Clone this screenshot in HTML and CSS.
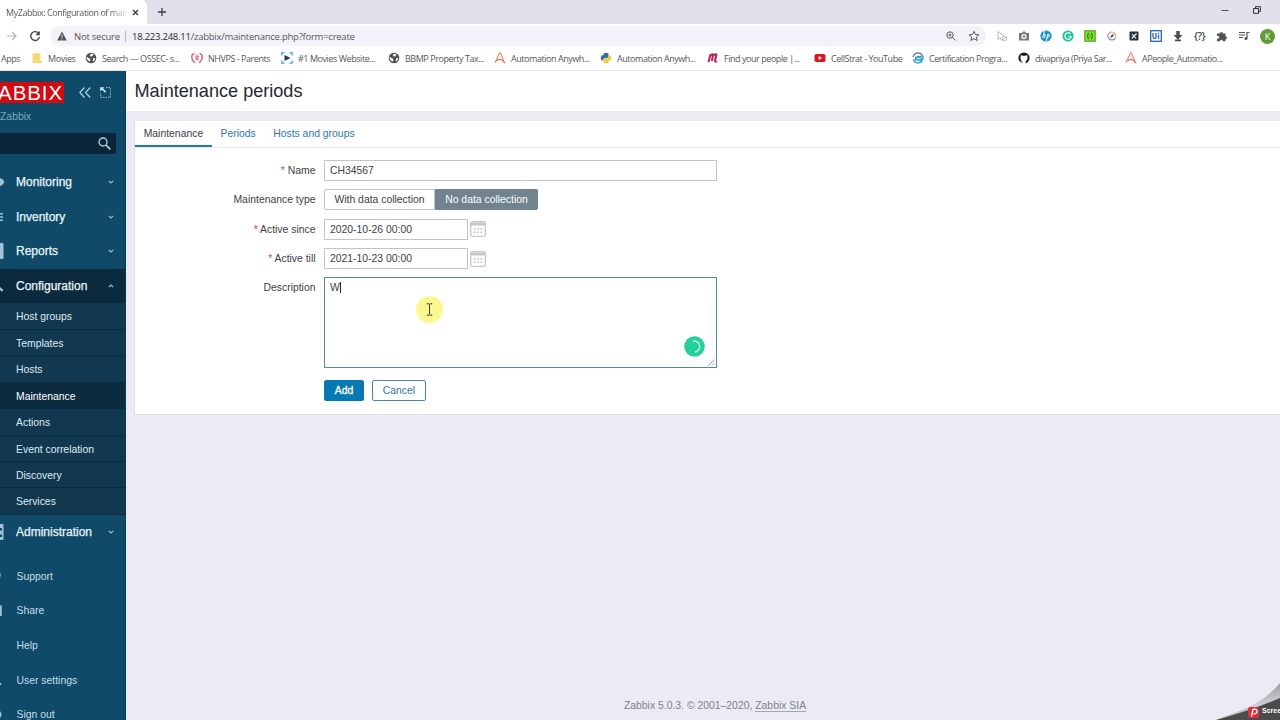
FILE: index.html
```html
<!DOCTYPE html>
<html lang="en">
<head>
  <meta charset="UTF-8">
  <title>MyZabbix: Configuration of maintenance periods</title>
  <link rel="stylesheet" href="styles.css">
</head>
<body>
  <!-- Shared icons -->
  <svg width="0" height="0" class="icon-defs">
    <symbol id="globe" viewBox="0 0 12 12">
      <circle cx="6" cy="6" r="5.3" fill="#4d5156"/>
      <path d="M1.5 4.5Q3 6 4.5 6.2L5.5 8 4.5 9.8Q2 8.500 1.500 6ZM6 1.800L8.500 2.300 7.500 4.200 5.500 4.500 4.800 3.200ZM8 6.200L10.300 6 9.500 8.500 7.800 9.500Z" fill="#fff"/>
    </symbol>
    <symbol id="anywhere" viewBox="0 0 12 12">
      <path d="M1 10.800L5.400 1Q6 .4 6.500 1.200L10 9.500" fill="none" stroke="#e58b5e" stroke-width="1.100"/>
      <path d="M2.500 9Q6 5.500 9.500 9.500L11 11" fill="none" stroke="#d9656a" stroke-width="1.100"/>
    </symbol>
    <symbol id="chevron" viewBox="0 0 6 6">
      <path d="M.8 1.800L3 4 5.200 1.800" fill="none" stroke="#9fc3d6" stroke-width="1.100"/>
    </symbol>
    <symbol id="calendar" viewBox="0 0 16 16">
      <rect x=".7" y=".7" width="14.600" height="14.600" rx="1.500" fill="#fff" stroke="#c3c6ce" stroke-width="1.300"/>
      <path d="M.5 1.500h15v3H.5z" fill="#c3c6ce"/>
      <path d="M4 8h1.500M7.300 8h1.500M10.600 8h1.500M4 11.300h1.500M7.300 11.300h1.500M10.600 11.300h1.500" stroke="#b9bdc6" stroke-width="1.500"/>
    </symbol>
  </svg>

  <!-- Browser -->
  <header class="browser">
    <div class="tab-strip">
      <div class="tab">
        <span class="tab-title">MyZabbix: Configuration of main</span>
        <svg class="tab-close" width="7" height="7" viewBox="0 0 7 7"><path d="M1 1l5 5M6 1L1 6" stroke="#3c4043" stroke-width="1.400"/></svg>
      </div>
      <svg class="new-tab" width="10" height="10" viewBox="0 0 10 10"><path d="M5 1v8M1 5h8" stroke="#3c4043" stroke-width="1.300"/></svg>
      <div class="window-buttons">
        <svg width="8" height="8" viewBox="0 0 8 8"><path d="M.5 4.500h7" stroke="#555"/></svg>
        <svg width="8" height="8" viewBox="0 0 8 8"><path d="M.6 2.500h4.900v4.900H.6zM2.500 2.300V.7h4.900v4.900H5.700" fill="none" stroke="#333"/></svg>
      </div>
    </div>

    <div class="toolbar">
      <svg class="nav-forward" width="12" height="12" viewBox="0 0 12 12"><path d="M1 6h9M6 2l4 4-4 4" fill="none" stroke="#b1b3b6" stroke-width="1.200"/></svg>
      <svg class="nav-reload" width="12" height="12" viewBox="0 0 12 12"><path d="M9.700 3.500A4.400 4.400 0 1 0 10.400 7" fill="none" stroke="#45494d" stroke-width="1.400"/><path d="M10.800.8v4.400H6.400z" fill="#45494d"/></svg>
      <div class="address-bar">
        <svg class="warn" width="10" height="10" viewBox="0 0 10 10"><path d="M5 .5L9.800 9.500H.2z" fill="#505357"/><path d="M5 3.700v2.800M5 7.300v1" stroke="#f1f1f6"/></svg>
        <span class="not-secure">Not secure</span>
        <span class="url"><b>18.223.248.11</b>/zabbix/maintenance.php?form=create</span>
        <svg class="zoom-icon" width="10" height="10" viewBox="0 0 10 10"><circle cx="4" cy="4" r="3.200" fill="none" stroke="#55595d"/><path d="M6.300 6.300L9.500 9.500M4 2.500v3M2.500 4h3" stroke="#55595d"/></svg>
        <svg width="12" height="12" viewBox="0 0 12 12"><path d="M6 1.300l1.400 3.200 3.500.3-2.600 2.300.8 3.400L6 8.700l-3.100 1.800.8-3.400L1.100 4.800l3.500-.3z" fill="none" stroke="#55595d"/></svg>
      </div>
      <div class="extensions">
        <svg viewBox="0 0 12 12"><path d="M2 1.500v8l2-2 1.500 3M2 1.500l6 4.800" fill="none" stroke="#b4b5b8"/><circle cx="8.500" cy="8.500" r="2.300" fill="none" stroke="#b4b5b8"/><path d="M7 10l3-3" stroke="#b4b5b8"/></svg>
        <svg viewBox="0 0 12 12"><path d="M1 3h3l1-1.500h2L8 3h3v7.500H1z" fill="#77797c"/><circle cx="6" cy="6.500" r="2.600" fill="#fff"/><circle cx="6" cy="6.500" r="1.300" fill="#77797c"/></svg>
        <svg viewBox="0 0 12 12"><circle cx="6" cy="6" r="5.600" fill="#1494ce"/><path d="M4.500 1L2.700 8M3.500 5q2-1.500 1.700 0L4.500 8M8 4L6.200 11M7.500 4.500q2.500-1 1.700 1.200T6.800 8" fill="none" stroke="#fff"/></svg>
        <svg viewBox="0 0 12 12"><circle cx="6" cy="6" r="5.600" fill="#1cc598"/><path d="M8.500 4A3.200 3.200 0 1 0 9.200 6.700H6.500" fill="none" stroke="#fff" stroke-width="1.200"/></svg>
        <svg viewBox="0 0 12 12"><rect x=".8" y=".8" width="10.400" height="10.400" fill="#7be52a" stroke="#459315"/><path d="M4.800 3.200H4v2L3.200 6 4 6.800v2h.8M7.200 3.200H8v2l.8.8-.8.800v2h-.8M6 4.500v1M6 6.500v1" fill="none" stroke="#31620f"/></svg>
        <svg viewBox="0 0 12 12"><path d="M2.200 7.500A4 4 0 0 1 6 2" fill="none" stroke="#d9867a" stroke-width="1.200"/><path d="M6 2a4 4 0 0 1 3 6.500" fill="none" stroke="#e6b45b" stroke-width="1.200"/><path d="M9 8.500a4 4 0 0 1-6.800-1" fill="none" stroke="#698ed0" stroke-width="1.200"/><path d="M8.300 3.700L6.800 7 4 8l1.200-3z" fill="#44618a"/></svg>
        <svg viewBox="0 0 12 12"><rect x="1.500" y="1.500" width="9" height="9" rx="1" fill="#27313c"/><path d="M4 4l4 4.500M8.500 3.500l-4.800 5" stroke="#fff" stroke-width="1.100"/></svg>
        <svg viewBox="0 0 12 12"><rect x=".7" y=".7" width="10.600" height="10.600" fill="#fff" stroke="#2862b6" stroke-width="1.300"/><path d="M3 3v4q0 1.500 1.500 1.500T6 7V3M8.500 4.800v3.900M8.500 2.700v1.200" fill="none" stroke="#2862b6" stroke-width="1.300"/></svg>
        <svg viewBox="0 0 12 12"><path d="M4.300 1h3.400v4H10.500L6 9.800 1.500 5h2.800zM3 9.500h6v1.800H3z" fill="#4a4d50"/></svg>
        <span class="json-ext">{?}</span>
        <svg viewBox="0 0 12 12"><path d="M1 3.500h2.800a1.500 1.500 0 1 1 3 0h2.700v2.700a1.500 1.500 0 1 1 0 3v2H7a1.500 1.500 0 1 0-3 0H1V8.500a1.500 1.500 0 1 0 0-2.600z" fill="#4f5357"/></svg>
        <svg viewBox="0 0 12 12"><path d="M1 2.500h6M1 5h6M1 7.500h4M9 8V2.500h2.500" fill="none" stroke="#4f5357" stroke-width="1.200"/><circle cx="8" cy="8.500" r="1.500" fill="#4f5357"/></svg>
        <span class="avatar">K</span>
      </div>
    </div>

    <nav class="bookmarks">
      <a><span>Apps</span></a>
      <a><svg viewBox="0 0 12 12"><path d="M1.500 1.200h8v8.300l1 1.500H1.500z" fill="#f6da79"/><path d="M8 9.500h2.500V11H8z" fill="#e8c458"/></svg><span>Movies</span></a>
      <a><svg><use href="#globe"/></svg><span>Search — OSSEC- s...</span></a>
      <a><svg viewBox="0 0 12 12"><path d="M3.500 1.500Q.5 2 .8 5.500 1 9 4 10.500M8.500 1.500q3 .5 2.700 4Q11 9 8 10.500" fill="none" stroke="#e0708c" stroke-width="1.500"/><path d="M4.500 3q1.500-2 3 0l.5 3.500Q6 11 4 6.500z" fill="#f2afbf"/><path d="M5 4.500h.8M6.700 4.500h.8M6 6v2" stroke="#b64261"/></svg><span>NHVPS - Parents</span></a>
      <a><svg viewBox="0 0 12 12"><path d="M3.500.8H.8v2.700M8.500.8h2.700v2.700M.8 8.500v2.700h2.700M11.200 8.500v2.700H8.500" fill="none" stroke="#32acd8" stroke-width="1.300"/><path d="M3.500 3l6 3-6 3z" fill="#28364a"/></svg><span>#1 Movies Website...</span></a>
      <a><svg><use href="#globe"/></svg><span>BBMP Property Tax...</span></a>
      <a><svg><use href="#anywhere"/></svg><span>Automation Anywh...</span></a>
      <a><svg viewBox="0 0 12 12"><path d="M3.500 3V1.500Q6-.2 8.500 1.500V5L7 6.200H4L3 8.500H1.500Q0 6 1.500 3.800z" fill="#3d7199"/><path d="M8.500 9v1.500Q6 12.200 3.500 10.500V7.500L5 6.600h3L9 3.500h1.500Q12 6 10.500 8.200z" fill="#f2cc43"/></svg><span>Automation Anywh...</span></a>
      <a><svg viewBox="0 0 12 12"><path d="M1.500 10L3.500 2.500M3.300 3.500Q6.500 1 6 3.500L4.800 9M6 3.500Q10 1 9.300 3.500L8 8.500q0 1.500 2 1" fill="none" stroke="#c31d52" stroke-width="2"/></svg><span>Find your people |...</span></a>
      <a><svg viewBox="0 0 12 12"><rect x=".5" y="2" width="11" height="8" rx="1.800" fill="#d91921"/><path d="M4.700 4l3.300 2-3.300 2z" fill="#fff"/></svg><span>CellStrat - YouTube</span></a>
      <a><svg viewBox="0 0 12 12"><path d="M1 5Q2 1 6 1q4 0 4.500 3.500L7 4.500Q3 5 3 9" fill="none" stroke="#6f8795" stroke-width="1.300"/><path d="M1.500 7.500Q2 10.800 6 11q4-.5 5-5Q8 9 4 7.500M3 5.500h6" fill="none" stroke="#2ba8dc" stroke-width="1.500"/></svg><span>Certification Progra...</span></a>
      <a><svg viewBox="0 0 12 12"><circle cx="6" cy="6" r="5.600" fill="#191717"/><path d="M4.300 12V9.500Q2.300 8.500 2.500 5.800L2.700 3l1.800.8h3L9.300 3l.2 2.800Q9.700 8.500 7.700 9.300V12z" fill="#fff"/><path d="M4.300 10.300Q3 10.500 2.300 9" fill="none" stroke="#fff" stroke-width=".8"/></svg><span>divapriya (Priya Sar...</span></a>
      <a><svg><use href="#anywhere"/></svg><span>APeople_Automatio...</span></a>
    </nav>
  </header>

  <!-- Zabbix -->
  <div class="app">
    <aside class="sidebar">
      <div class="sidebar-header">
        <div class="logo">ZABBIX</div>
        <svg class="collapse" width="12" height="11" viewBox="0 0 12 11"><path d="M5.500.5L.8 5.500l4.700 5M11.200.5l-4.700 5 4.700 5" fill="none" stroke="#b5d0de" stroke-width="1.200"/></svg>
        <svg width="11" height="11" viewBox="0 0 11 11"><path d="M6 .6h4.400v9.800H.6V6" fill="none" stroke="#9fc3d6" stroke-dasharray="1.500 1"/><path d="M.2.200h4.300L3.200 1.600l3 3-1.200 1.200-3-3L.2 4.500z" fill="#cfe3ee"/></svg>
      </div>
      <div class="server-name">Zabbix</div>
      <div class="search">
        <svg width="13" height="13" viewBox="0 0 13 13"><circle cx="5" cy="5" r="4" fill="none" stroke="#b5d0de" stroke-width="1.300"/><path d="M8 8l4.300 4.300" stroke="#b5d0de" stroke-width="1.700"/></svg>
      </div>

      <ul class="menu">
        <li><svg class="menu-icon" viewBox="0 0 4 12"><path d="M0 2q3 1 4.500 4Q3 9 0 10z"/></svg>Monitoring<svg class="arrow"><use href="#chevron"/></svg></li>
        <li><svg class="menu-icon" viewBox="0 0 4 12"><path d="M0 2h3v1.500H0zM0 5.200h3v1.500H0zM0 8.500h3V10H0z"/></svg>Inventory<svg class="arrow"><use href="#chevron"/></svg></li>
        <li><svg class="menu-icon tall" viewBox="0 0 4 16"><path d="M0 0h2.500q1 0 1 1v14q0 1-1 1H0z"/></svg>Reports<svg class="arrow"><use href="#chevron"/></svg></li>
        <li class="open"><svg class="menu-icon" viewBox="0 0 4 12"><path d="M0 7l3 2.500q.5 2-1.500 2L0 10z"/></svg>Configuration<svg class="arrow up"><use href="#chevron"/></svg></li>
      </ul>
      <ul class="submenu">
        <li>Host groups</li>
        <li>Templates</li>
        <li>Hosts</li>
        <li class="selected">Maintenance</li>
        <li>Actions</li>
        <li>Event correlation</li>
        <li>Discovery</li>
        <li>Services</li>
      </ul>
      <ul class="menu">
        <li><svg class="menu-icon tall" viewBox="0 0 4 16"><path d="M0 0h2.500q1 0 1 1v14q0 1-1 1H0v-3h2v-2.500H0v-4h2V4H0z"/></svg>Administration<svg class="arrow"><use href="#chevron"/></svg></li>
      </ul>
      <ul class="user-menu">
        <li><svg class="menu-icon" viewBox="0 0 4 12"><path d="M0 2q1.300 2 0 6z"/></svg>Support</li>
        <li><svg class="menu-icon" viewBox="0 0 4 12"><path d="M0 .5h1.700v10.500H0z"/></svg>Share</li>
        <li>Help</li>
        <li><svg class="menu-icon" viewBox="0 0 4 12"><path d="M0 8.500l1.500 1.500v1H0z"/></svg>User settings</li>
        <li><svg class="menu-icon" viewBox="0 0 4 12"><path d="M0 2q3 3.500 0 7z"/></svg>Sign out</li>
      </ul>
    </aside>

    <main class="content">
      <h1>Maintenance periods</h1>

      <section class="card">
        <div class="tabs">
          <a class="active">Maintenance</a>
          <a>Periods</a>
          <a>Hosts and groups</a>
        </div>

        <form class="form">
          <label class="required">Name</label>
          <div class="field"><div class="input wide">CH34567</div></div>

          <label>Maintenance type</label>
          <div class="field segmented"><span>With data collection</span><span class="checked">No data collection</span></div>

          <label class="required">Active since</label>
          <div class="field"><div class="input date">2020-10-26 00:00</div><svg class="calendar"><use href="#calendar"/></svg></div>

          <label class="required">Active till</label>
          <div class="field"><div class="input date">2021-10-23 00:00</div><svg class="calendar"><use href="#calendar"/></svg></div>

          <label>Description</label>
          <div class="textarea">W<span class="caret"></span>
            <span class="cursor"><svg width="7" height="13" viewBox="0 0 7 13"><path d="M.8.800H3l.5.500.5-.5h2.200M.8 12.200H3l.5-.5.5.500h2.200M3.500 1.500v10" fill="none" stroke="#3c3c30"/></svg></span>
            <svg class="grammarly" width="21" height="21" viewBox="0 0 21 21"><circle cx="10.500" cy="10.500" r="10.300" fill="#25d09a"/><path d="M9 5.200A5.500 5.500 0 1 1 11 16" fill="none" stroke="#c5f5e4" stroke-width="1.400"/></svg>
            <svg class="resize" width="7" height="7" viewBox="0 0 7 7"><path d="M.5 6.500l6-6M4 6.500L6.500 4" stroke="#888" stroke-width=".8"/></svg>
          </div>

          <div class="buttons">
            <span class="btn primary">Add</span>
            <span class="btn">Cancel</span>
          </div>
        </form>
      </section>

      <footer>Zabbix 5.0.3. © 2001–2020, <a>Zabbix SIA</a></footer>
    </main>
  </div>

  <!-- Recorder watermark -->
  <div class="watermark">
    <svg width="64" height="40" viewBox="0 0 64 40">
      <defs><linearGradient id="curl" x1="0.500" y1="0" x2="0.800" y2="1"><stop offset="0" stop-color="#8d8d92"/><stop offset=".6" stop-color="#cfcfd3"/><stop offset="1" stop-color="#909094"/></linearGradient></defs>
      <path d="M0 40L28 29Q50 20 64 3V40z" fill="url(#curl)"/>
      <path d="M0 40Q34 31 64 18V40z" fill="#4b4b4c"/>
      <rect x="32" y="27" width="11" height="11" rx="2.500" fill="#d9303c"/>
      <path d="M35.500 36.500l1.500-7q4-1 4 1.700t-3.500 2.600" fill="none" stroke="#fff" stroke-width="1.300"/>
    </svg>
    <span>Screen</span>
  </div>
</body>
</html>
```
FILE: styles.css
```css
:root {
  --sidebar: #0f4a68;
  --sidebar-dark: #0b2a3d;
  --page-bg: #ecebf4;
  --link: #3078a3;
  --primary: #0878b4;
  --text: #3c4146;
  --chrome-text: #55585c;
}

* {
  box-sizing: border-box;
}

body {
  margin: 0;
  width: 1280px;
  height: 720px;
  overflow: hidden;
  position: relative;
  background: var(--page-bg);
  color: var(--text);
  font-family: "Liberation Sans", Arial, sans-serif;
  font-size: 10.4px;
}

ul {
  list-style: none;
  margin: 0;
  padding: 0;
}

svg {
  flex: none;
  display: block;
}

.icon-defs {
  position: absolute;
}

/* Browser */
.browser {
  height: 71px;
  background: #fff;
  border-bottom: 1px solid #e4e4e8;
  font-family: "Open Sans", "Noto Sans", sans-serif;
  color: var(--chrome-text);
}

.tab-strip {
  display: flex;
  align-items: center;
  height: 24px;
  background: #e0dfea;
}

.tab {
  display: flex;
  align-items: center;
  width: 147px;
  height: 24px;
  padding-left: 6px;
  background: #fff;
  border-radius: 0 6px 0 0;
}

.tab-title {
  width: 120px;
  overflow: hidden;
  white-space: nowrap;
  font-size: 9px;
  letter-spacing: -0.45px;
  -webkit-mask-image: linear-gradient(to right, #000 85%, rgba(0, 0, 0, 0.2));
}

.tab-close {
  margin-left: 6px;
}

.new-tab {
  margin-left: 10px;
}

.window-buttons {
  display: flex;
  gap: 24px;
  margin: -4px 19px 0 auto;
}

.toolbar {
  display: flex;
  align-items: center;
  height: 24px;
}

.nav-forward {
  margin-left: 6px;
}

.nav-reload {
  margin-left: 11px;
}

.address-bar {
  display: flex;
  align-items: center;
  width: 936px;
  height: 20px;
  margin-left: 9px;
  padding: 0 6px 0 7px;
  background: #f3f2f8;
  border-radius: 10px;
  font-size: 9.5px;
  letter-spacing: -0.24px;
}

.not-secure {
  width: 52px;
  margin-left: 7px;
  border-right: 1px solid #b5b5ba;
  line-height: 11px;
  white-space: nowrap;
}

.url {
  margin-left: 6px;
  white-space: nowrap;
}

.url b {
  font-weight: normal;
  color: #26282b;
}

.zoom-icon {
  margin: 0 12px 0 auto;
}

.extensions {
  display: flex;
  align-items: center;
  gap: 10px;
  margin-left: 10px;
}

.extensions svg {
  width: 12px;
  height: 12px;
}

.json-ext {
  width: 12px;
  font-size: 10px;
  font-weight: 600;
  line-height: 12px;
  letter-spacing: -0.3px;
  color: #3c4043;
}

.avatar {
  width: 15px;
  height: 15px;
  border-radius: 50%;
  background: #5f9c38;
  color: #fff;
  font-size: 9px;
  line-height: 15px;
  text-align: center;
}

.bookmarks {
  display: flex;
  align-items: center;
  height: 20px;
  padding-left: 1px;
  font-size: 9px;
  letter-spacing: -0.45px;
}

.bookmarks a {
  display: flex;
  align-items: center;
  gap: 5px;
  width: 106px;
  white-space: nowrap;
}

.bookmarks svg {
  width: 12px;
  height: 12px;
}

.bookmarks a:nth-child(1) { width: 30px; }
.bookmarks a:nth-child(2) { width: 54px; letter-spacing: -0.35px; }
.bookmarks a:nth-child(4) { width: 90px; }
.bookmarks a:nth-child(5) { width: 107px; }
.bookmarks a:nth-child(8) { width: 107px; }
.bookmarks a:nth-child(9) { width: 107px; }
.bookmarks a:nth-child(10) { width: 98px; }
.bookmarks a:nth-child(12) { width: 107px; }

/* App */
.app {
  display: flex;
  height: 649px;
}

.sidebar {
  width: 126px;
  height: 649px;
  overflow: hidden;
  background: var(--sidebar);
  border-right: 1px solid #0a3a54;
  color: #dcebf3;
}

.sidebar-header {
  display: flex;
  align-items: center;
  height: 42px;
}

.logo {
  display: flex;
  justify-content: flex-end;
  width: 64px;
  height: 21px;
  padding-right: 1px;
  background: #d20a11;
  color: #fff;
  font-size: 20.5px;
  letter-spacing: 0.9px;
  line-height: 22px;
  overflow: hidden;
}

.collapse {
  margin: 0 9px 0 15px;
}

.server-name {
  height: 20px;
  line-height: 7px;
  color: #7ba6bb;
}

.search {
  display: flex;
  align-items: center;
  justify-content: flex-end;
  width: 116px;
  height: 21px;
  padding-right: 5px;
  background: #0b2638;
  border-radius: 0 2px 2px 0;
}

.menu:first-of-type {
  margin-top: 11px;
}

.menu li {
  display: flex;
  align-items: center;
  position: relative;
  height: 34.6px;
  padding: 0 11px 0 16px;
  font-size: 12px;
  color: #e9f4fa;
  -webkit-text-stroke: 0.25px #e9f4fa;
}

.menu-icon {
  position: absolute;
  left: 0;
  width: 4px;
  height: 12px;
  fill: #9fc3d6;
}

.menu-icon.tall {
  height: 16px;
}

.arrow {
  width: 6px;
  height: 6px;
  margin-left: auto;
}

.arrow.up {
  transform: rotate(180deg);
}

.menu .open {
  background: var(--sidebar-dark);
}

.submenu {
  background: #12384f;
}

.submenu li {
  height: 26.45px;
  padding-left: 16px;
  border-bottom: 1px solid #0a2c40;
  line-height: 27px;
}

.submenu .selected {
  background: #0c2b3e;
  color: #fff;
}

.user-menu {
  margin-top: 9.5px;
}

.user-menu li {
  display: flex;
  align-items: center;
  position: relative;
  height: 34.6px;
  padding-left: 16.5px;
  color: #c6dde9;
}

.content {
  display: flex;
  flex-direction: column;
  flex: 1;
}

h1 {
  height: 40px;
  margin: 0;
  padding-left: 8.5px;
  background: #fff;
  color: #25282c;
  font-size: 18.1px;
  font-weight: normal;
  line-height: 41px;
}

.card {
  height: 294px;
  margin: 10px 0 0 8px;
  background: #fff;
  border: solid #dddfe6;
  border-width: 0 0 1px 1px;
}

.tabs {
  display: flex;
  height: 27px;
  border-bottom: 1px solid #ececf1;
}

.tabs a {
  height: 26px;
  padding: 0 8.7px;
  line-height: 25px;
  color: var(--link);
}

.tabs .active {
  color: var(--text);
  border-bottom: 2px solid #1c7ba8;
}

.form {
  display: grid;
  grid-template-columns: 180.5px 393px;
  column-gap: 8.5px;
  row-gap: 8px;
  padding-top: 12px;
  line-height: 22px;
}

.form label {
  height: 21px;
  text-align: right;
}

.required::before {
  content: "* ";
  color: #d3405c;
}

.field {
  display: flex;
  align-items: center;
  height: 21.3px;
}

.input {
  height: 21px;
  padding-left: 5px;
  border: 1px solid #c2c4c9;
  line-height: 20px;
}

.wide {
  width: 393px;
}

.date {
  width: 144px;
}

.calendar {
  width: 16px;
  height: 16px;
  margin-left: 2px;
}

.segmented span {
  width: 111px;
  height: 21px;
  border: 1px solid #c2c4c9;
  border-radius: 2px 0 0 2px;
  text-align: center;
  line-height: 20px;
}

.segmented .checked {
  width: 103px;
  border-color: #70838f;
  border-radius: 0 2px 2px 0;
  background: #70838f;
  color: #fff;
}

.textarea {
  position: relative;
  height: 91px;
  padding-left: 5px;
  border: 1px solid #5088a5;
  line-height: 20px;
}

.caret {
  display: inline-block;
  height: 11px;
  border-left: 1px solid #222;
  vertical-align: -2px;
}

.cursor {
  position: absolute;
  left: 91px;
  top: 18px;
  display: flex;
  align-items: center;
  justify-content: center;
  width: 27px;
  height: 27px;
  border-radius: 50%;
  background: #fbf88f;
}

.grammarly {
  position: absolute;
  right: 11px;
  bottom: 10px;
}

.resize {
  position: absolute;
  right: 1px;
  bottom: 1px;
}

.buttons {
  grid-column: 2;
  display: flex;
  gap: 8px;
  margin-top: 4px;
}

.btn {
  width: 54px;
  height: 21px;
  border: 1px solid #4788aa;
  border-radius: 2px;
  color: var(--link);
  text-align: center;
  line-height: 20px;
}

.btn.primary {
  width: 40px;
  border-color: var(--primary);
  background: var(--primary);
  color: #fff;
  -webkit-text-stroke: 0.3px #fff;
}

footer {
  margin: auto 0 9px 24px;
  text-align: center;
  color: #7c8288;
}

footer a {
  border-bottom: 1px solid #a3a8ae;
}

/* Recorder watermark */
.watermark {
  position: absolute;
  right: 0;
  bottom: 0;
}

.watermark span {
  position: absolute;
  left: 46px;
  bottom: 6px;
  width: 18px;
  overflow: hidden;
  font-size: 7px;
  font-weight: bold;
  color: #fff;
}
```
